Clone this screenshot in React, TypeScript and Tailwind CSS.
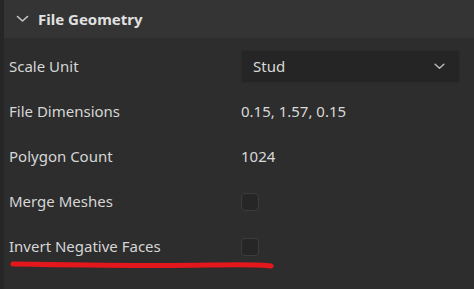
import React from "react";

const font = { fontFamily: '"Noto Sans", "Open Sans", sans-serif' };

function Chevron({ className }: { className?: string }) {
    return (
        <svg viewBox="0 0 12 8" className={className} fill="none" stroke="currentColor" strokeWidth={1.6} strokeLinecap="round" strokeLinejoin="round">
            <path d="M1 1.5 L6 6 L11 1.5" />
        </svg>
    );
}

function Checkbox() {
    return <div className="w-[18px] h-[18px] rounded-[4px] bg-[#262626] border border-[#3c3c3c]" />;
}

function Row({ label, children }: { label: string; children: React.ReactNode }) {
    return (
        <div className="flex items-center h-[45px]">
            <div className="w-[232px] text-[15px] text-[#d6d6d6]">{label}</div>
            <div className="flex-1 flex items-center text-[15px] text-[#d9d9d9]">{children}</div>
        </div>
    );
}

export default function App() {
    return (
        <div className="w-[474px] h-[289px] bg-[#2d2d2d] flex overflow-hidden" style={font}>
            <div className="w-[4px] bg-[#262626]" />
            <div className="flex-1 relative">
                <div className="h-[38px] bg-[#343434] flex items-center pl-[12px] gap-[9px]">
                    <Chevron className="w-[13px] h-[8px] text-[#c8c8c8]" />
                    <span className="text-[15px] font-bold text-[#e0e0e0]">File Geometry</span>
                </div>
                <div className="pl-[5px] pt-[6px]">
                    <Row label="Scale Unit">
                        <div className="w-[219px] h-[33px] bg-[#252525] border border-[#2a2a2a] rounded-[3px] flex items-center justify-between pl-[11px] pr-[14px]">
                            <span>Stud</span>
                            <Chevron className="w-[11px] h-[7px] text-[#bdbdbd]" />
                        </div>
                    </Row>
                    <Row label="File Dimensions">0.15, 1.57, 0.15</Row>
                    <Row label="Polygon Count">1024</Row>
                    <Row label="Merge Meshes">
                        <Checkbox />
                    </Row>
                    <Row label="Invert Negative Faces">
                        <Checkbox />
                    </Row>
                </div>
                <svg className="absolute left-[5px] top-[258px]" width="270" height="14" viewBox="0 0 270 14">
                    <path d="M4 6 C60 7 140 8 200 7 C230 6.5 250 6 262 8" stroke="#e3171c" strokeWidth={5} strokeLinecap="round" fill="none" />
                </svg>
            </div>
        </div>
    );
}
